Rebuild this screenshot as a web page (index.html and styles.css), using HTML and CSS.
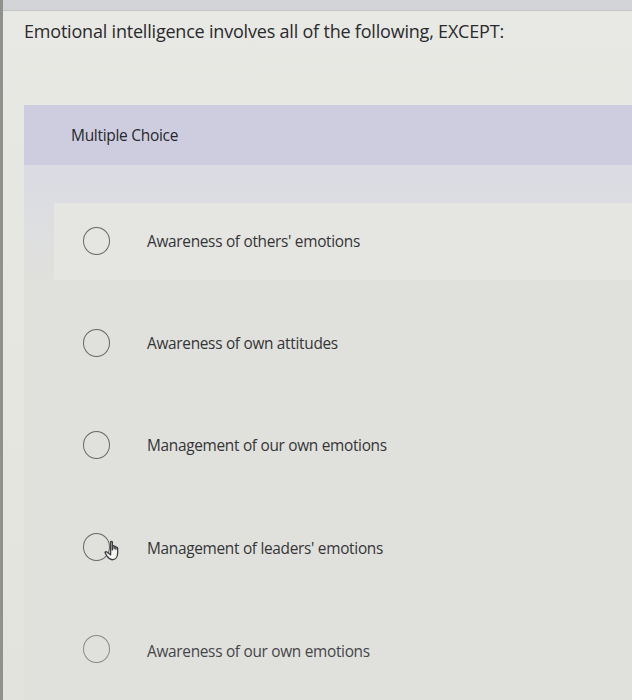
FILE: index.html
```html
<!DOCTYPE html>
<html>
<head>
<meta charset="utf-8">
<link rel="stylesheet" href="styles.css">
</head>
<body>
<div class="frame">
  <div class="topbar"></div>
  <div class="page">
    <h1 class="question">Emotional intelligence involves all of the following, EXCEPT:</h1>
    <div class="panel">
      <div class="panel-head">Multiple Choice</div>
      <div class="panel-gap"></div>
      <div class="options">
        <div class="option hover"><span class="radio"></span><span class="label">Awareness of others' emotions</span></div>
        <div class="option"><span class="radio"></span><span class="label">Awareness of own attitudes</span></div>
        <div class="option"><span class="radio"></span><span class="label">Management of our own emotions</span></div>
        <div class="option"><span class="radio">
          <svg class="cursor" width="22" height="25" viewBox="0 0 20 22"><path d="M6 2.5c0-1 1.6-1 1.6 0v7.5M7.6 8V6.5c0-1 1.6-1 1.6 0V9M9.2 7.2c0-1 1.6-1 1.6 0V9.5M10.8 8c0-1 1.6-1 1.6 0v4.5c0 3.5-2 6-5 6-2.2 0-3.4-1.4-4.6-3.2L1.2 12.5c-.6-.9.6-1.8 1.4-1L6 14V2.5" fill="#f4f4f0" stroke="#3e3e42" stroke-width="1.2" stroke-linejoin="round"/></svg>
        </span><span class="label">Management of leaders' emotions</span></div>
        <div class="option"><span class="radio"></span><span class="label">Awareness of our own emotions</span></div>
      </div>
    </div>
  </div>
</div>
</body>
</html>
```
FILE: styles.css
```css
html, body {
  margin: 0;
  padding: 0;
  height: 100%;
}
body {
  background: #e6e7e1;
  font-family: "Open Sans", "Liberation Sans", Arial, sans-serif;
  color: #2e2e30;
}
.frame {
  height: 700px;
  border-left: 3px solid #8f918d;
  box-sizing: border-box;
  overflow: hidden;
}
.topbar {
  height: 10px;
  background: #d3d4d7;
  border-bottom: 1px solid #c4c5c7;
}
.page {
  padding: 0 0 0 21px;
  background: linear-gradient(#e8e9e4, #e2e3dc);
  height: 689px;
}
.question {
  margin: 0;
  padding: 8px 0 0 0;
  height: 94px;
  box-sizing: border-box;
  font-size: 18px;
  font-weight: 400;
  letter-spacing: -0.2px;
  color: #2a2a2c;
}
.panel {
  background: linear-gradient(#dadbe3 60px, #dcdde1 100px, #e0e1dc 180px);
}
.panel-head {
  height: 60px;
  background: #cdcddf;
  padding: 19px 0 0 47px;
  box-sizing: border-box;
  font-size: 15.5px;
  letter-spacing: -0.3px;
  color: #28282c;
}
.panel-gap {
  height: 25px;
}
.options {
  display: flex;
  flex-direction: column;
  padding-left: 30px;
}
.option {
  height: 102px;
  display: flex;
  align-items: center;
  padding-left: 29px;
  gap: 37px;
}
.option.hover {
  background: linear-gradient(transparent 13px, #e5e6e1 13px, #e5e6e1 90px, transparent 90px);
}
.radio {
  position: relative;
  width: 27px;
  height: 28px;
  border: 1.5px solid #68686c;
  border-radius: 50%;
  flex: none;
  box-sizing: border-box;
}
.cursor {
  position: absolute;
  left: 20px;
  top: 5px;
}
.label {
  font-size: 15.4px;
  letter-spacing: -0.3px;
  color: #353538;
}
.option:nth-child(4) .label { margin-top: 3px; }
.option:nth-child(5) .label { margin-top: 5px; color: #45454a; }
.option:nth-child(5) .radio { border-color: #8a8a8e; }
```
